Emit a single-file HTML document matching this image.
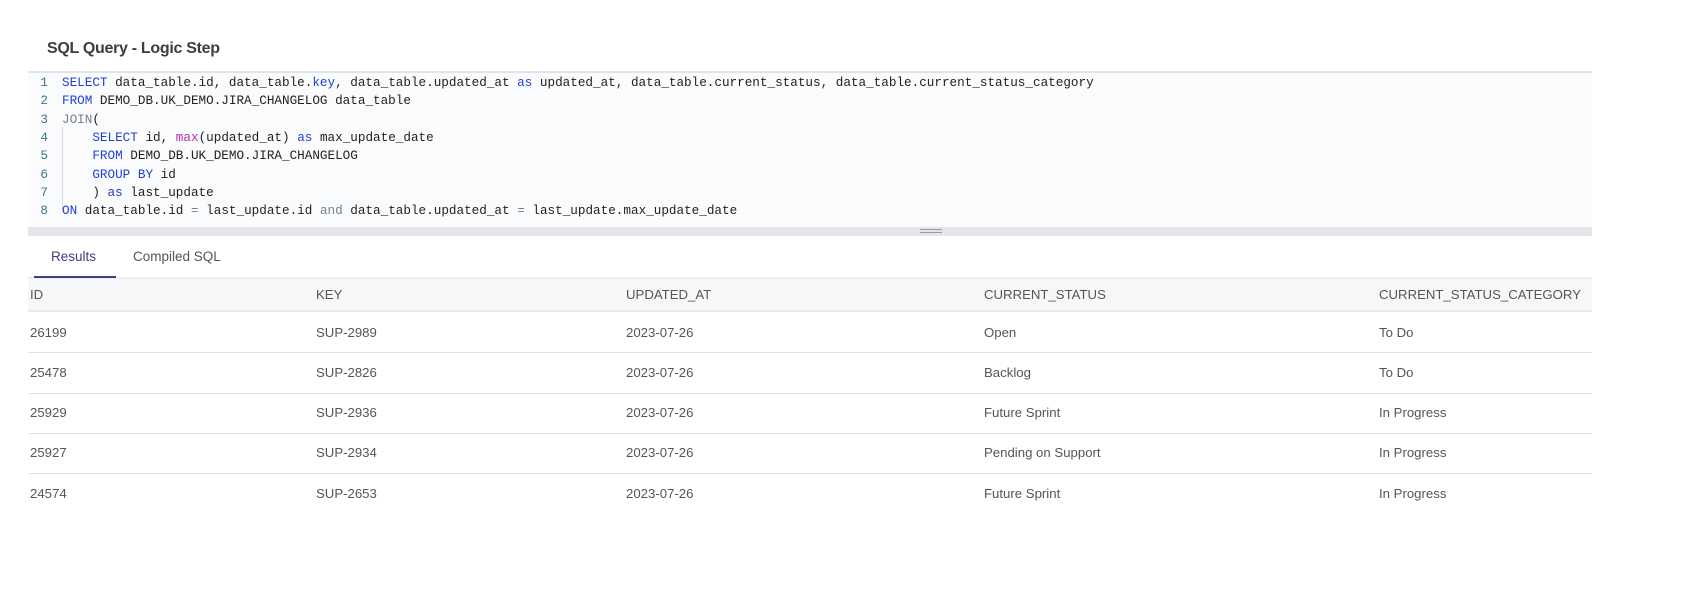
<!DOCTYPE html>
<html><head><meta charset="utf-8"><style>
body{margin:0;width:1686px;height:604px;background:#fff;font-family:"Liberation Sans",Arial,sans-serif;position:relative;overflow:hidden}
.title{position:absolute;left:47px;top:40px;font-size:16px;font-weight:bold;color:#3a3d42;letter-spacing:-0.3px}
.editor{position:absolute;left:28px;top:71px;width:1564px;height:156px;background:#fafbfc;border-top:2px solid #e1e3e7}
.ln{position:absolute;left:0;width:20px;text-align:right;font-family:"Liberation Mono",monospace;font-size:12.7px;color:#3f7486}
.code{position:absolute;left:34px;font-family:"Liberation Mono",monospace;font-size:12.65px;color:#222;white-space:pre}
.k{color:#1f3fd6}.m{color:#b02db0}.g{color:#7a8088}
.guide{position:absolute;left:62px;top:127px;width:1px;height:84px;background:#d8dade}
.bar{position:absolute;left:28px;top:227px;width:1564px;height:9px;background:#e4e6ea}
.handle{position:absolute;left:920px;top:229px;width:22px;height:4px;border-top:1px solid #999;border-bottom:1px solid #999;box-sizing:border-box}
.tab{position:absolute;top:249px;font-size:13.5px}
.ul{position:absolute;left:34px;top:276px;width:82px;height:2px;background:#3c3f87}
.hdr{position:absolute;left:28px;top:277px;width:1564px;height:35px;background:#f6f7f9;border-top:2px solid #eceef1;border-bottom:2px solid #e6e8eb;box-sizing:border-box}
.cell{position:absolute;font-size:13.2px;color:#555}
.line{position:absolute;left:28px;width:1564px;height:1px;background:#dfe1e4}
</style></head><body>
<div class="title">SQL Query - Logic Step</div>
<div class="editor"></div>
<div class="guide"></div>
<div style="position:absolute;left:28px;top:74px">
<div class="ln" style="top:1px">1</div><div class="code" style="top:1px"><span class="k">SELECT</span> data_table.id, data_table.<span class="k">key</span>, data_table.updated_at <span class="k">as</span> updated_at, data_table.current_status, data_table.current_status_category</div>
<div class="ln" style="top:19.3px">2</div><div class="code" style="top:19.3px"><span class="k">FROM</span> DEMO_DB.UK_DEMO.JIRA_CHANGELOG data_table</div>
<div class="ln" style="top:37.6px">3</div><div class="code" style="top:37.6px"><span class="g">JOIN</span>(</div>
<div class="ln" style="top:55.9px">4</div><div class="code" style="top:55.9px">    <span class="k">SELECT</span> id, <span class="m">max</span>(updated_at) <span class="k">as</span> max_update_date</div>
<div class="ln" style="top:74.2px">5</div><div class="code" style="top:74.2px">    <span class="k">FROM</span> DEMO_DB.UK_DEMO.JIRA_CHANGELOG</div>
<div class="ln" style="top:92.5px">6</div><div class="code" style="top:92.5px">    <span class="k">GROUP BY</span> id</div>
<div class="ln" style="top:110.8px">7</div><div class="code" style="top:110.8px">    ) <span class="k">as</span> last_update</div>
<div class="ln" style="top:129.1px">8</div><div class="code" style="top:129.1px"><span class="k">ON</span> data_table.id <span class="g">=</span> last_update.id <span class="g">and</span> data_table.updated_at <span class="g">=</span> last_update.max_update_date</div>
</div>
<div class="bar"></div><div class="handle"></div>
<div class="tab" style="left:51px;color:#3c3f87">Results</div>
<div class="tab" style="left:133px;color:#555">Compiled SQL</div>
<div class="hdr"></div>
<div class="ul"></div>
<div class="cell" style="top:287px;left:30px">ID</div>
<div class="cell" style="top:287px;left:316px">KEY</div>
<div class="cell" style="top:287px;left:626px">UPDATED_AT</div>
<div class="cell" style="top:287px;left:984px">CURRENT_STATUS</div>
<div class="cell" style="top:287px;left:1379px">CURRENT_STATUS_CATEGORY</div>

<div class="cell" style="top:325px;left:30px">26199</div><div class="cell" style="top:325px;left:316px">SUP-2989</div><div class="cell" style="top:325px;left:626px">2023-07-26</div><div class="cell" style="top:325px;left:984px">Open</div><div class="cell" style="top:325px;left:1379px">To Do</div>
<div class="line" style="top:352px"></div>
<div class="cell" style="top:365px;left:30px">25478</div><div class="cell" style="top:365px;left:316px">SUP-2826</div><div class="cell" style="top:365px;left:626px">2023-07-26</div><div class="cell" style="top:365px;left:984px">Backlog</div><div class="cell" style="top:365px;left:1379px">To Do</div>
<div class="line" style="top:393px"></div>
<div class="cell" style="top:405px;left:30px">25929</div><div class="cell" style="top:405px;left:316px">SUP-2936</div><div class="cell" style="top:405px;left:626px">2023-07-26</div><div class="cell" style="top:405px;left:984px">Future Sprint</div><div class="cell" style="top:405px;left:1379px">In Progress</div>
<div class="line" style="top:433px"></div>
<div class="cell" style="top:445px;left:30px">25927</div><div class="cell" style="top:445px;left:316px">SUP-2934</div><div class="cell" style="top:445px;left:626px">2023-07-26</div><div class="cell" style="top:445px;left:984px">Pending on Support</div><div class="cell" style="top:445px;left:1379px">In Progress</div>
<div class="line" style="top:473px"></div>
<div class="cell" style="top:486px;left:30px">24574</div><div class="cell" style="top:486px;left:316px">SUP-2653</div><div class="cell" style="top:486px;left:626px">2023-07-26</div><div class="cell" style="top:486px;left:984px">Future Sprint</div><div class="cell" style="top:486px;left:1379px">In Progress</div>
</body></html>
